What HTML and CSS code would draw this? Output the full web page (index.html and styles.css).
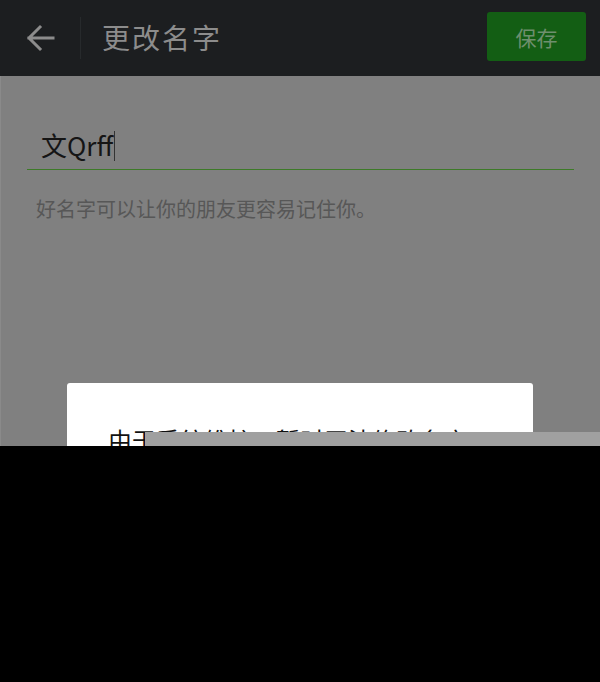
FILE: index.html
```html
<!DOCTYPE html>
<html>
<head>
    <meta name="viewport" content="width=device-width, initial-scale=1.0">
    <title>更改名字</title>
    <link rel="stylesheet" href="styles.css">
</head>
<body>
<div class="screen">
    <div class="header">
        <div class="back">
            <svg width="30" height="30" viewBox="0 0 30 30">
                <path d="M28 15 H4 M15 4 L4 15 L15 26" fill="none" stroke="#8c8c8c" stroke-width="3" stroke-linecap="square"/>
            </svg>
        </div>
        <div class="divider"></div>
        <div class="title">更改名字</div>
        <div class="save">保存</div>
    </div>
    <div class="content">
        <div class="field">
            <span class="value">文Qrff</span><span class="cursor"></span>
        </div>
        <div class="hint">好名字可以让你的朋友更容易记住你。</div>
    </div>
    <div class="dialog">
        <div class="message">由于系统维护，暂时无法修改名字</div>
    </div>
    <div class="toast"></div>
</div>
<div class="blackout"></div>
</body>
</html>
```

FILE: styles.css
```css
* {
    margin: 0;
    padding: 0;
    box-sizing: border-box;
    font-family: "Noto Sans CJK SC", "Noto Sans", sans-serif;
}
body {
    width: 600px;
    height: 682px;
    display: flex;
    flex-direction: column;
    background: #000;
    overflow: hidden;
}
.screen {
    position: relative;
    height: 446px;
    flex: none;
    display: flex;
    flex-direction: column;
    background: #808080;
    overflow: hidden;
}
.header {
    height: 76px;
    flex: none;
    background: #1c1e20;
    display: flex;
    align-items: center;
    padding: 0 14px 0 25px;
}
.back {
    width: 30px;
    height: 30px;
    display: flex;
}
.divider {
    width: 1px;
    height: 42px;
    background: #272a2c;
    margin-left: 25px;
}
.title {
    margin-left: 21px;
    font-size: 28px;
    color: #8c8c8c;
    letter-spacing: 2px;
    flex: 1;
    line-height: 1;
    padding-bottom: 2px;
}
.save {
    width: 99px;
    height: 49px;
    margin-top: -3px;
    background: #135e14;
    border-radius: 3px;
    color: #6e8f6e;
    font-size: 21px;
    display: flex;
    align-items: center;
    justify-content: center;
}
.content {
    flex: 1;
    border-left: 1px solid #8a8a8a;
    padding: 0 26px 0 26px;
}
.field {
    margin-top: 54px;
    height: 40px;
    border-bottom: 1px solid #3d7a28;
    padding-left: 14px;
    display: flex;
    align-items: flex-start;
}
.value {
    font-size: 26px;
    line-height: 30px;
    color: #151515;
}
.cursor {
    width: 1px;
    height: 30px;
    margin-top: 1px;
    margin-left: 1px;
    background: #333;
}
.hint {
    margin-top: 25px;
    padding-left: 9px;
    font-size: 20px;
    color: #575757;
    line-height: 28px;
}
.dialog {
    position: absolute;
    left: 67px;
    top: 383px;
    width: 466px;
    height: 200px;
    background: #fff;
    border-radius: 3px;
    padding: 42px 0 0 41px;
}
.message {
    font-size: 24px;
    line-height: 30px;
    color: #111;
}
.toast {
    position: absolute;
    left: 145px;
    right: 0;
    top: 432px;
    height: 14px;
    background: #a0a0a0;
}
.blackout {
    flex: 1;
    background: #000;
}
```
